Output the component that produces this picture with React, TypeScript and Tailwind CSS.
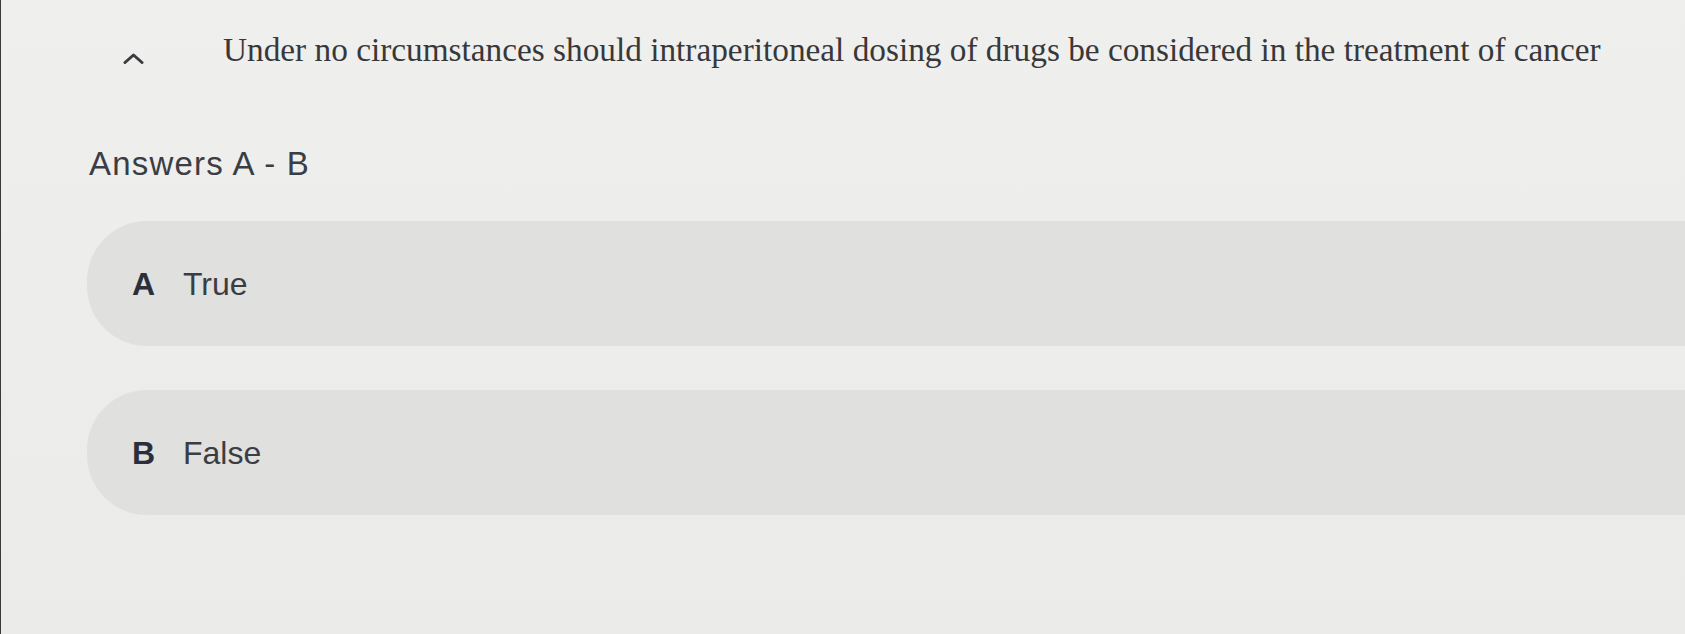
import { ReactNode } from 'react';

const options = [
  { key: 'A', text: 'True' },
  { key: 'B', text: 'False' },
];

function ChevronUp() {
  return (
    <svg width="21" height="11" viewBox="0 0 21 11" fill="none" aria-hidden="true">
      <path
        d="M2 9.5 L10.5 2 L19 9.5"
        stroke="#3a3b3e"
        strokeWidth="3"
        strokeLinecap="round"
        strokeLinejoin="round"
      />
    </svg>
  );
}

function Option({ label, children }: { label: string; children: ReactNode }) {
  return (
    <div className="h-[125px] w-full rounded-l-[60px] bg-[#e0e0de] flex items-center pl-[45px]">
      <span className="w-[51px] text-[32px] leading-[40px] font-bold text-[#2b2f3a]">{label}</span>
      <span className="text-[32px] leading-[40px] text-[#3a3d44]">{children}</span>
    </div>
  );
}

export default function App() {
  return (
    <div
      className="w-[1685px] h-[634px] overflow-hidden border-l border-[#3a3a3a] bg-linear-to-b from-[#efefed] to-[#ebebe9]"
      style={{ fontFamily: '"Liberation Sans", Arial, sans-serif' }}
    >
      {/* question header */}
      <div className="flex items-start pt-[30px] pl-[122px]">
        <div className="mt-[23px] w-[21px]">
          <ChevronUp />
        </div>
        <p
          className="ml-[79px] text-[33.3px] leading-[40px] text-[#38383a]"
          style={{ fontFamily: '"Liberation Serif", "Times New Roman", serif' }}
        >
          Under no circumstances should intraperitoneal dosing of drugs be considered in the treatment of cancer
        </p>
      </div>

      <h2 className="mt-[74px] pl-[88px] text-[33px] leading-[40px] tracking-[1.2px] text-[#3a3d44]">
        Answers A - B
      </h2>

      <div className="mt-[37px] pl-[86px] flex flex-col gap-[44px]">
        {options.map((o) => (
          <Option key={o.key} label={o.key}>
            {o.text}
          </Option>
        ))}
      </div>
    </div>
  );
}
